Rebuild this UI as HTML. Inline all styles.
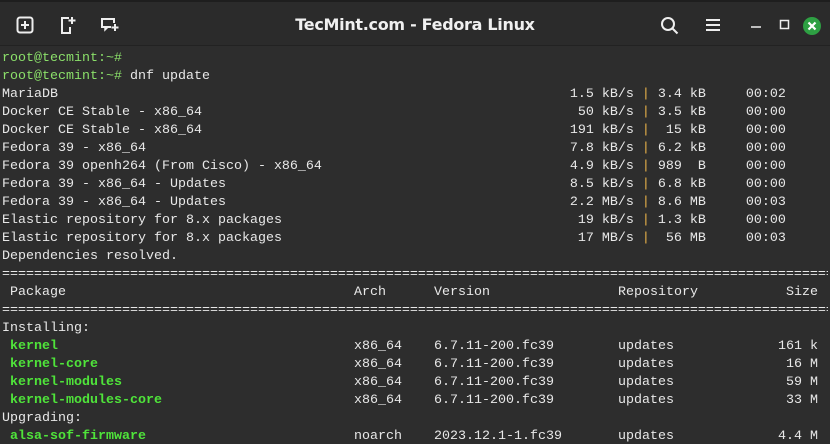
<!DOCTYPE html>
<html><head><meta charset="utf-8"><style>
html,body{margin:0;padding:0;width:830px;height:444px;overflow:hidden;background:#2d2d2d;position:relative}
.hdr{position:absolute;left:0;top:0;width:830px;height:46px;background:#2b2b2b;border-bottom:1px solid #222;border-top:2px solid #1e1e1e;box-sizing:border-box}
.title{position:absolute;left:0;width:830px;top:13px;text-align:center;font:bold 16px "DejaVu Sans","Liberation Sans",sans-serif;color:#f0f0f0;letter-spacing:-0.3px}
svg{position:absolute}
.term{position:absolute;left:0;top:0;width:830px;height:444px;overflow:hidden}
pre{position:absolute;left:2px;top:50px;margin:0;font:13.33px/18px "Liberation Mono","DejaVu Sans Mono",monospace;color:#e8e8e8;white-space:pre;width:826px;overflow:hidden}
.r{position:absolute;height:18px;font:13.33px/18px "Liberation Mono","DejaVu Sans Mono",monospace;color:#e8e8e8;white-space:pre}
.p{color:#8be06a}
.g{color:#4fe43a;font-weight:bold}
.b{color:#e9b24a}
</style></head><body>
<div class="hdr">
<svg style="left:16px;top:14px" width="18" height="18" viewBox="0 0 18 18"><rect x="1.5" y="1.5" width="15" height="15" rx="2.5" fill="none" stroke="#eee" stroke-width="2"/><path d="M9 5v8M5 9h8" stroke="#eee" stroke-width="2"/></svg>
<svg style="left:60px;top:13px" width="16" height="20" viewBox="0 0 16 20"><path d="M9 3H2v15h8V12" fill="none" stroke="#eee" stroke-width="2"/><path d="M12 2v7M8.5 5.5h7" stroke="#eee" stroke-width="2"/></svg>
<svg style="left:100px;top:15px" width="20" height="16" viewBox="0 0 20 16"><path d="M11 10H2V2h12v4" fill="none" stroke="#eee" stroke-width="2"/><path d="M5 10v3l3-3" fill="#eee" stroke="#eee" stroke-width="1.5"/><path d="M15 7v7M11.5 10.5h7" stroke="#eee" stroke-width="2"/></svg>
<div class="title">TecMint.com - Fedora Linux</div>
<svg style="left:660px;top:14px" width="19" height="19" viewBox="0 0 19 19"><circle cx="8" cy="8" r="6" fill="none" stroke="#eee" stroke-width="2"/><path d="M12.5 12.5l5 5" stroke="#eee" stroke-width="2"/></svg>
<svg style="left:705px;top:16px" width="16" height="14" viewBox="0 0 16 14"><path d="M1 2h14M1 7h14M1 12h14" stroke="#eee" stroke-width="2"/></svg>
<svg style="left:750px;top:22px" width="12" height="6"><path d="M1 3h10" stroke="#eee" stroke-width="1.5"/></svg>
<svg style="left:779px;top:17px" width="12" height="12"><rect x="1.5" y="1.5" width="8" height="8" fill="none" stroke="#eee" stroke-width="1.5"/></svg>
<svg style="left:802px;top:14px" width="20" height="20" viewBox="0 0 20 20"><circle cx="10" cy="10" r="9" fill="#2ea043"/><path d="M6.5 6.5l7 7M13.5 6.5l-7 7" stroke="#fff" stroke-width="2.2"/></svg>
</div>
<div class="term">
<pre><span class="p">root@tecmint:~#</span>
<span class="p">root@tecmint:~#</span> dnf update
MariaDB                                                                1.5 kB/s <span class="b">|</span> 3.4 kB     00:02
Docker CE Stable - x86_64                                               50 kB/s <span class="b">|</span> 3.5 kB     00:00
Docker CE Stable - x86_64                                              191 kB/s <span class="b">|</span>  15 kB     00:00
Fedora 39 - x86_64                                                     7.8 kB/s <span class="b">|</span> 6.2 kB     00:00
Fedora 39 openh264 (From Cisco) - x86_64                               4.9 kB/s <span class="b">|</span> 989  B     00:00
Fedora 39 - x86_64 - Updates                                           8.5 kB/s <span class="b">|</span> 6.8 kB     00:00
Fedora 39 - x86_64 - Updates                                           2.2 MB/s <span class="b">|</span> 8.6 MB     00:03
Elastic repository for 8.x packages                                     19 kB/s <span class="b">|</span> 1.3 kB     00:00
Elastic repository for 8.x packages                                     17 MB/s <span class="b">|</span>  56 MB     00:03
Dependencies resolved.
=========================================================================================================
 Package
=========================================================================================================
Installing:
 <span class="g">kernel</span>
 <span class="g">kernel-core</span>
 <span class="g">kernel-modules</span>
 <span class="g">kernel-modules-core</span>
Upgrading:
 <span class="g">alsa-sof-firmware</span>
</pre>
<!-- Table columns: Arch col44=354, Version col54=434, Repo col77=618, Size right edge=818 -->
<div class="r" style="top:284px;left:354px">Arch</div>
<div class="r" style="top:284px;left:434px">Version</div>
<div class="r" style="top:284px;left:618px">Repository</div>
<div class="r" style="top:284px;left:786px">Size</div>

<div class="r" style="top:338px;left:354px">x86_64</div>
<div class="r" style="top:338px;left:434px">6.7.11-200.fc39</div>
<div class="r" style="top:338px;left:618px">updates</div>
<div class="r" style="top:338px;left:778px">161 k</div>

<div class="r" style="top:356px;left:354px">x86_64</div>
<div class="r" style="top:356px;left:434px">6.7.11-200.fc39</div>
<div class="r" style="top:356px;left:618px">updates</div>
<div class="r" style="top:356px;left:786px">16 M</div>

<div class="r" style="top:374px;left:354px">x86_64</div>
<div class="r" style="top:374px;left:434px">6.7.11-200.fc39</div>
<div class="r" style="top:374px;left:618px">updates</div>
<div class="r" style="top:374px;left:786px">59 M</div>

<div class="r" style="top:392px;left:354px">x86_64</div>
<div class="r" style="top:392px;left:434px">6.7.11-200.fc39</div>
<div class="r" style="top:392px;left:618px">updates</div>
<div class="r" style="top:392px;left:786px">33 M</div>

<div class="r" style="top:428px;left:354px">noarch</div>
<div class="r" style="top:428px;left:434px">2023.12.1-1.fc39</div>
<div class="r" style="top:428px;left:618px">updates</div>
<div class="r" style="top:428px;left:778px">4.4 M</div>
</div>
</body></html>
